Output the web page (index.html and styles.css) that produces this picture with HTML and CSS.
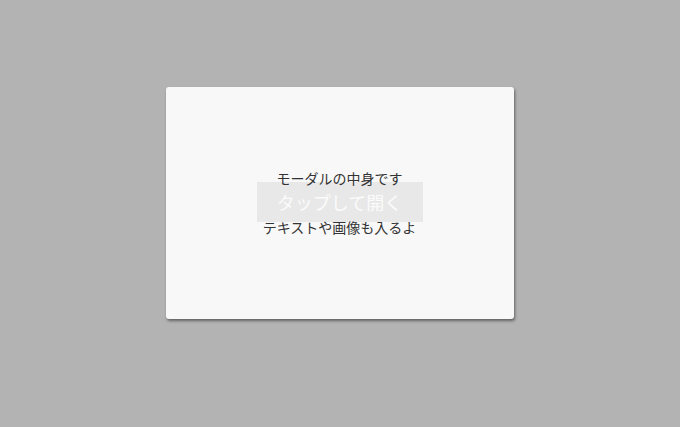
FILE: index.html
```html
<!DOCTYPE html>
<html lang="ja">
<head>
    <meta charset="UTF-8">
    <title>モーダル</title>
    <link rel="stylesheet" href="styles.css">
</head>
<body>
    <div class="overlay">
        <div class="modal">
            <button type="button" class="open-btn">タップして開く</button>
            <div class="content">
                <p>モーダルの中身です</p>
                <p>テキストや画像も入るよ</p>
            </div>
        </div>
    </div>
</body>
</html>
```

FILE: styles.css
```css
*{
    margin: 0;
    padding: 0;
    box-sizing: border-box;
}

html, body{
    height: 100%;
}

body{
    background-color: #b3b3b3;
    font-family: 'Noto Sans CJK JP', sans-serif;
}

.overlay{
    height: 100%;
    padding-bottom: 22px;
    display: flex;
    align-items: center;
    justify-content: center;
}

.modal{
    position: relative;
    width: 348px;
    height: 232px;
    margin-left: -1px;
    background-color: #f8f8f8;
    border-radius: 3px;
    box-shadow: 1px 2px 3px rgba(0, 0, 0, 0.45);
    display: flex;
    align-items: center;
    justify-content: center;
}

/* ボタンは下の画面にあるものが透けて見えている */
.modal .open-btn{
    position: absolute;
    left: 91px;
    top: 95px;
    width: 166px;
    height: 40px;
    border: none;
    background-color: #e8e8e8;
    color: #fbfbfb;
    font-family: inherit;
    font-size: 18px;
}

.content{
    position: relative;
    margin-top: 0;
    text-align: center;
    color: #333333;
    font-size: 14px;
    line-height: 49px;
}
```
